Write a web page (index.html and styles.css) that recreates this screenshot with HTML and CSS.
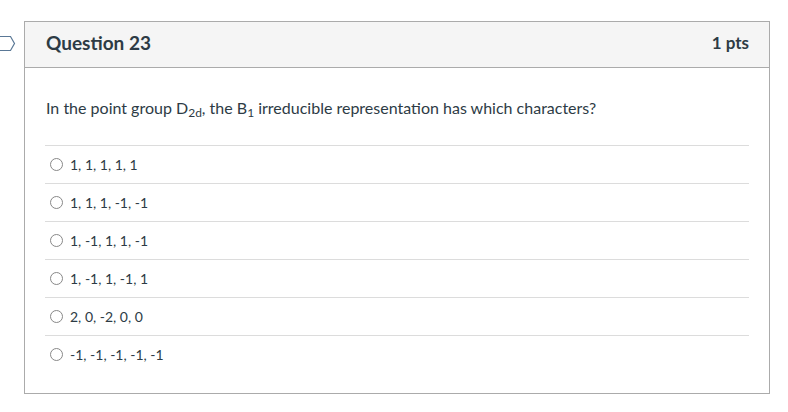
FILE: index.html
```html
<!DOCTYPE html>
<html>
<head>
<meta charset="utf-8">
<link rel="stylesheet" href="styles.css">
</head>
<body>
<div class="page">
  <div class="card">
    <svg class="flag" width="16" height="17" viewBox="0 0 16 17">
      <path d="M0 1.5 H10.5 L14.5 8.5 L10.5 15.5 H0" fill="none" stroke="#5a7896" stroke-width="1.2"/>
    </svg>
    <div class="header">
      <span class="title">Question 23</span>
      <span class="pts">1 pts</span>
    </div>
    <div class="body">
      <p class="question">In the point group D<sub>2d</sub>, the B<sub>1</sub> irreducible representation has which characters?</p>
      <div class="answers">
        <div class="answer"><span class="radio"></span><span class="label">1, 1, 1, 1, 1</span></div>
        <div class="answer"><span class="radio"></span><span class="label">1, 1, 1, -1, -1</span></div>
        <div class="answer"><span class="radio"></span><span class="label">1, -1, 1, 1, -1</span></div>
        <div class="answer"><span class="radio"></span><span class="label">1, -1, 1, -1, 1</span></div>
        <div class="answer"><span class="radio"></span><span class="label">2, 0, -2, 0, 0</span></div>
        <div class="answer"><span class="radio"></span><span class="label">-1, -1, -1, -1, -1</span></div>
      </div>
    </div>
  </div>
</div>
</body>
</html>
```

FILE: styles.css
```css
html, body {
  margin: 0;
  padding: 0;
  background: #fff;
}
.page {
  padding: 21px 0 0 24px;
}
.card {
  position: relative;
  width: 744px;
  border: 1px solid #ababab;
  font-family: Lato, "Liberation Sans", sans-serif;
  color: #2d3b45;
}
.flag {
  position: absolute;
  left: -25px;
  top: 13px;
}
.header {
  display: flex;
  justify-content: space-between;
  align-items: flex-start;
  box-sizing: border-box;
  height: 46px;
  padding: 10px 20px 0 21px;
  background: #f5f5f5;
  border-bottom: 1px solid #ababab;
}
.title {
  font-weight: 700;
  font-size: 19px;
  line-height: 22px;
}
.pts {
  font-weight: 700;
  font-size: 17px;
  line-height: 22px;
}
.body {
  padding: 0 20px 20px 20px;
}
.question {
  margin: 0;
  padding: 30px 0 27px 1px;
  font-size: 16px;
  line-height: 20px;
}
.question sub {
  font-size: 12px;
  line-height: 0;
  vertical-align: -3px;
}
.answer {
  display: flex;
  align-items: center;
  height: 37px;
  border-top: 1px solid #dcdcdc;
  font-size: 14px;
}
.radio {
  box-sizing: border-box;
  width: 13px;
  height: 13px;
  border: 1px solid #888;
  border-radius: 50%;
  margin: 0 7px 0 5px;
}
```
